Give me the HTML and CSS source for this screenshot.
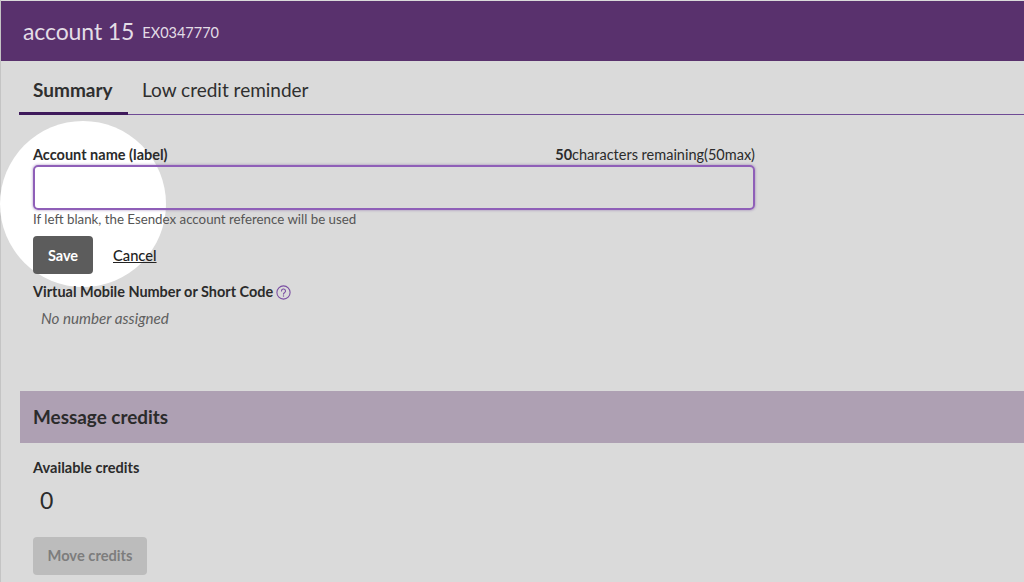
FILE: index.html
```html
<!DOCTYPE html>
<html lang="en">
<head>
    <meta charset="UTF-8">
    <title>account 15</title>
    <link rel="stylesheet" href="styles.css">
</head>
<body>
    <div class="page">
        <div class="spotlight"></div>
        <header class="page-header">
            <h1>account 15</h1>
            <span class="account-ref">EX0347770</span>
        </header>
        <nav class="tabs">
            <a class="tab active">Summary</a>
            <a class="tab">Low credit reminder</a>
        </nav>
        <form class="summary">
            <div class="label-row">
                <label for="account-name">Account name (label)</label>
                <span class="counter"><b>50</b>characters remaining(50max)</span>
            </div>
            <input type="text" id="account-name" class="name-input">
            <p class="hint">If left blank, the Esendex account reference will be used</p>
            <div class="actions">
                <button type="button" class="btn-save">Save</button>
                <a class="cancel">Cancel</a>
            </div>
            <div class="field-title">
                Virtual Mobile Number or Short Code
                <svg class="help" width="15" height="15" viewBox="0 0 15 15" fill="none">
                    <circle cx="7.5" cy="7.5" r="6.6" stroke="#7b4fa3" stroke-width="1.1"/>
                    <path d="M5.5 6a2 2 0 1 1 3 1.7c-.7.4-1 .8-1 1.4" stroke="#7b4fa3" stroke-width="1.1" stroke-linecap="round"/>
                    <circle cx="7.5" cy="11" r=".7" fill="#7b4fa3"/>
                </svg>
            </div>
            <p class="no-number">No number assigned</p>
        </form>
        <section class="credits">
            <h2>Message credits</h2>
            <div class="credits-body">
                <div class="field-title">Available credits</div>
                <div class="credit-count">0</div>
                <button type="button" class="btn-move" disabled>Move credits</button>
            </div>
        </section>
    </div>
</body>
</html>
```

FILE: styles.css
```css
html, body {
    margin: 0;
    padding: 0;
    height: 100%;
    overflow: hidden;
}
body {
    font-family: Lato, "Open Sans", sans-serif;
    background-color: #dadada;
    color: #2b2b2b;
}
.page {
    position: relative;
    height: 582px;
    padding-top: 1px;
    box-sizing: border-box;
    border-left: 1px solid #c4c4c4;
}
.spotlight {
    position: absolute;
    left: -1px;
    top: 121px;
    width: 166px;
    height: 166px;
    border-radius: 50%;
    background-color: #fff;
}
.page-header {
    position: relative;
    display: flex;
    align-items: baseline;
    height: 60px;
    box-sizing: border-box;
    padding: 16px 0 0 22px;
    background-color: #59316d;
    color: #e3dde6;
}
.page-header h1 {
    margin: 0;
    font-size: 23px;
    line-height: 28px;
    font-weight: 400;
    letter-spacing: -0.1px;
}
.account-ref {
    margin-left: 8px;
    font-size: 14.5px;
    transform: translateY(-2px);
}
.tabs {
    position: relative;
    display: flex;
    height: 54px;
    margin-left: 18px;
    box-sizing: border-box;
    border-bottom: 1px solid #6f4a95;
}
.tab {
    height: 54px;
    box-sizing: border-box;
    padding: 17px 14px 0;
    font-size: 19px;
    line-height: 24px;
    color: #2f2f2f;
}
.tab.active {
    width: 109px;
    font-weight: 700;
    border-bottom: 3px solid #3e1a5b;
}
.summary {
    position: relative;
    margin-left: 32px;
    width: 722px;
    padding-top: 31px;
}
.label-row {
    display: flex;
    justify-content: space-between;
    align-items: baseline;
    height: 18px;
    font-size: 14.5px;
    line-height: 18px;
}
.label-row label {
    font-weight: 700;
}
.counter b {
    font-weight: 700;
}
.name-input {
    display: block;
    width: 100%;
    height: 45px;
    margin-top: 1px;
    box-sizing: border-box;
    background: transparent;
    border: 2px solid #8f5fb8;
    border-radius: 5px;
    box-shadow: 0 0 2px 1px rgba(120, 80, 160, 0.3);
    outline: none;
}
.hint {
    margin: 1px 0 0;
    font-size: 13.3px;
    line-height: 16px;
    color: #555;
}
.actions {
    display: flex;
    align-items: center;
    margin-top: 9px;
}
.btn-save {
    width: 60px;
    height: 38px;
    padding: 0;
    border: none;
    border-radius: 4px;
    background-color: #5c5c5c;
    color: #fff;
    font-family: inherit;
    font-size: 14.5px;
    font-weight: 700;
}
.cancel {
    margin-left: 20px;
    font-size: 14.7px;
    font-weight: 500;
    color: #222;
    text-decoration: underline;
}
.field-title {
    font-size: 14.6px;
    line-height: 18px;
    font-weight: 700;
}
.summary .field-title {
    display: flex;
    align-items: center;
    gap: 3px;
    margin-top: 9px;
    font-size: 14.45px;
}
.no-number {
    margin: 8px 0 0 8px;
    font-size: 15.2px;
    line-height: 18px;
    font-style: italic;
    color: #5f5f5f;
}
.credits {
    position: relative;
    margin-top: 64px;
    margin-left: 19px;
}
.credits h2 {
    margin: 0;
    height: 52px;
    box-sizing: border-box;
    padding: 14px 0 0 13px;
    background-color: #aea0b3;
    font-size: 18.9px;
    line-height: 24px;
    font-weight: 700;
    color: #2b2b2b;
}
.credits-body {
    padding: 16px 0 0 13px;
}
.credit-count {
    margin: 9px 0 0 7px;
    font-size: 23px;
    line-height: 28px;
    color: #2b2b2b;
}
.btn-move {
    display: block;
    width: 114px;
    height: 38px;
    margin-top: 23px;
    padding: 0 0 2px;
    border: none;
    border-radius: 4px;
    background-color: #bcbcbc;
    color: #7d7d7d;
    font-family: inherit;
    font-size: 14.7px;
    font-weight: 700;
}
```
